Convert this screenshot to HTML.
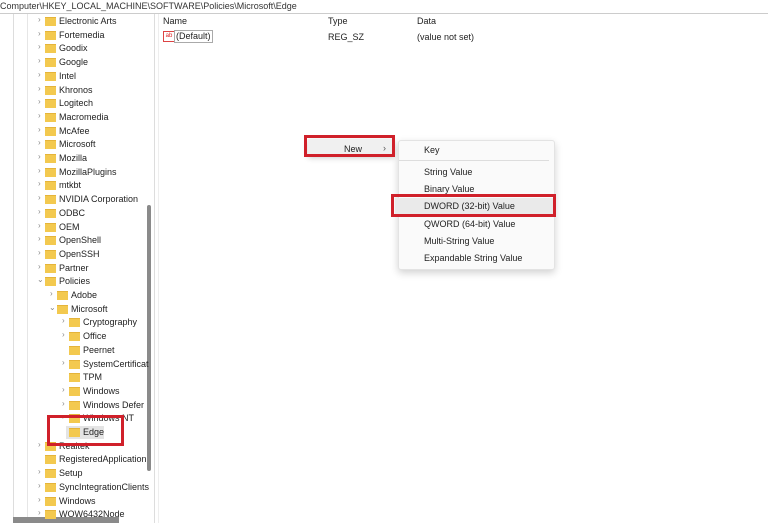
<!DOCTYPE html><html><head><style>
body{margin:0;width:768px;height:523px;overflow:hidden;background:#fff;font-family:"Liberation Sans",sans-serif;font-size:9px;color:#222;position:relative}
.a{position:absolute;white-space:nowrap}
.f{position:absolute;width:11px;height:8px;background:#f3c94f;border-top:1px solid #e5b43a}
.c{position:absolute;color:#888;font-size:8px}
.r{position:absolute;border:3px solid #d0202a}
</style></head><body>
<div class="a" style="left:0;top:0;width:768px;height:13px;border-bottom:1px solid #ccc;line-height:12px;font-size:9px;color:#333">Computer\HKEY_LOCAL_MACHINE\SOFTWARE\Policies\Microsoft\Edge</div>
<div class="a" style="left:13px;top:14px;width:1px;height:509px;background:#ddd"></div>
<div class="a" style="left:27px;top:14px;width:1px;height:509px;background:#e6e6e6"></div>
<div class="a" style="left:154px;top:14px;width:1px;height:509px;background:#ddd"></div>
<div class="a" style="left:158px;top:14px;width:1px;height:509px;background:#eee"></div>
<div class="a" style="left:147px;top:205px;width:4px;height:266px;background:#8a8a8a;border-radius:2px"></div>
<div class="a" style="left:13px;top:517px;width:106px;height:6px;background:#8a8a8a"></div>
<div id="t"></div>
<div class="a" style="left:163px;top:16px">Name</div>
<div class="a" style="left:328px;top:16px">Type</div>
<div class="a" style="left:417px;top:16px">Data</div>
<div class="a" style="left:163px;top:31px;width:10px;height:9px;background:#fff;border:1px solid #d44;font-size:6px;color:#d22;line-height:8px;text-align:center">ab</div>
<div class="a" style="left:174px;top:30px;border:1px solid #aaa;padding:0 1px;line-height:11px">(Default)</div>
<div class="a" style="left:328px;top:32px">REG_SZ</div>
<div class="a" style="left:417px;top:32px">(value not set)</div>
<div class="a" style="left:308px;top:139px;width:86px;height:17px;background:#f0f0f0;box-shadow:0 2px 6px rgba(0,0,0,.2)"></div>
<div class="a" style="left:344px;top:144px">New</div>
<div class="a" style="left:383px;top:143px;color:#555">›</div>
<div class="a" style="left:398px;top:140px;width:155px;height:128px;background:#fafafa;border:1px solid #e3e3e3;box-shadow:0 3px 8px rgba(0,0,0,.18);border-radius:3px"></div>
<div class="a" style="left:399px;top:160px;width:150px;height:1px;background:#ddd"></div>
<div class="a" style="left:395px;top:198px;width:158px;height:17px;background:#eaeaea"></div>
<div class="a" style="left:424px;top:145px">Key</div>
<div class="a" style="left:424px;top:167px">String Value</div>
<div class="a" style="left:424px;top:184px">Binary Value</div>
<div class="a" style="left:424px;top:201px">DWORD (32-bit) Value</div>
<div class="a" style="left:424px;top:219px">QWORD (64-bit) Value</div>
<div class="a" style="left:424px;top:236px">Multi-String Value</div>
<div class="a" style="left:424px;top:253px">Expandable String Value</div>
<div class="r" style="left:304px;top:135px;width:85px;height:16px"></div>
<div class="r" style="left:391px;top:194px;width:159px;height:17px"></div>
<div class="r" style="left:47px;top:415px;width:71px;height:25px"></div>
<script>
var d=[[0,"Electronic Arts",1],[0,"Fortemedia",1],[0,"Goodix",1],[0,"Google",1],[0,"Intel",1],[0,"Khronos",1],[0,"Logitech",1],[0,"Macromedia",1],[0,"McAfee",1],[0,"Microsoft",1],[0,"Mozilla",1],[0,"MozillaPlugins",1],[0,"mtkbt",1],[0,"NVIDIA Corporation",1],[0,"ODBC",1],[0,"OEM",1],[0,"OpenShell",1],[0,"OpenSSH",1],[0,"Partner",1],[0,"Policies",2],[1,"Adobe",1],[1,"Microsoft",2],[2,"Cryptography",1],[2,"Office",1],[2,"Peernet",0],[2,"SystemCertificat",1],[2,"TPM",0],[2,"Windows",1],[2,"Windows Defer",1],[2,"Windows NT",1],[2,"Edge",0],[0,"Realtek",1],[0,"RegisteredApplication",0],[0,"Setup",1],[0,"SyncIntegrationClients",1],[0,"Windows",1],[0,"WOW6432Node",1]];
var h="";d.forEach(function(e,i){var y=16+i*13.7,x=38+e[0]*12;
if(e[2]==1)h+='<div class="c" style="left:'+x+'px;top:'+(y-1)+'px">›</div>';
if(e[2]==2)h+='<div class="c" style="left:'+(x-1)+'px;top:'+(y-1)+'px">⌄</div>';
if(e[1]=="Edge")h+='<div class="a" style="left:66px;top:'+(y-1)+'px;width:38px;height:13px;background:#e4e4e4"></div>';
h+='<div class="f" style="left:'+(x+7)+'px;top:'+(y+1)+'px"></div><div class="a" style="left:'+(x+21)+'px;top:'+y+'px">'+e[1]+'</div>';});
document.getElementById("t").innerHTML=h;
</script>
<div class="a" style="left:0;top:517px;width:768px;height:0"></div>
</body></html>
